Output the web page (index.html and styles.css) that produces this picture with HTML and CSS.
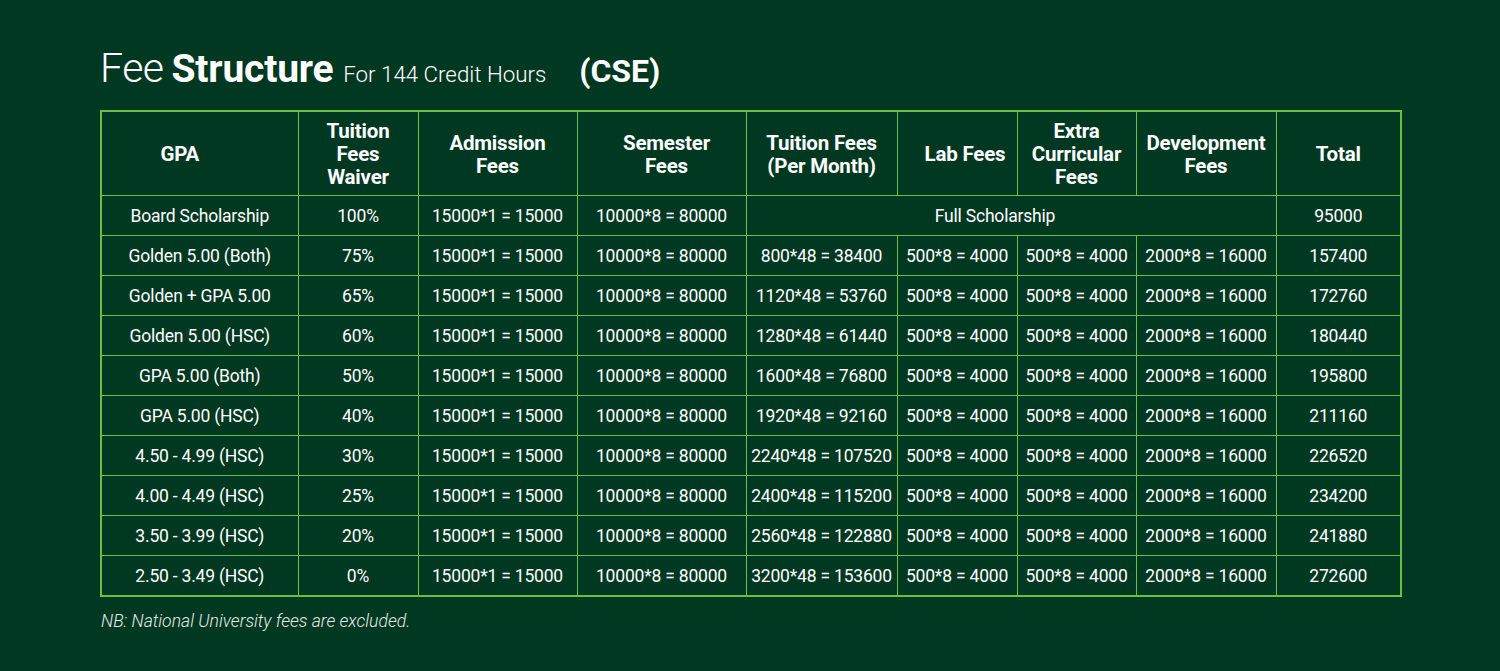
FILE: index.html
```html
<!DOCTYPE html>
<html>
<head>
<meta charset="utf-8">
<link rel="stylesheet" href="styles.css">
</head>
<body>
<div class="page">
  <h1 class="title"><span class="t-light">Fee</span> <span class="t-bold">Structure</span> <span class="t-sub">For 144 Credit Hours</span> <span class="t-cse">(CSE)</span></h1>
  <table class="fees">
    <colgroup>
      <col class="c1"><col class="c2"><col class="c3"><col class="c4"><col class="c5"><col class="c6"><col class="c7"><col class="c8"><col class="c9">
    </colgroup>
    <thead>
      <tr>
        <th class="h-gpa">GPA</th>
        <th>Tuition<br>Fees<br>Waiver</th>
        <th>Admission<br>Fees</th>
        <th class="h-sem">Semester<br>Fees</th>
        <th>Tuition Fees<br>(Per Month)</th>
        <th class="h-lab">Lab Fees</th>
        <th>Extra<br>Curricular<br>Fees</th>
        <th>Development<br>Fees</th>
        <th>Total</th>
      </tr>
    </thead>
    <tbody>
      <tr><td>Board Scholarship</td><td>100%</td><td>15000*1 = 15000</td><td>10000*8 = 80000</td><td colspan="4" class="full">Full Scholarship</td><td>95000</td></tr>
      <tr><td>Golden 5.00 (Both)</td><td>75%</td><td>15000*1 = 15000</td><td>10000*8 = 80000</td><td>800*48 = 38400</td><td>500*8 = 4000</td><td>500*8 = 4000</td><td>2000*8 = 16000</td><td>157400</td></tr>
      <tr><td>Golden + GPA 5.00</td><td>65%</td><td>15000*1 = 15000</td><td>10000*8 = 80000</td><td>1120*48 = 53760</td><td>500*8 = 4000</td><td>500*8 = 4000</td><td>2000*8 = 16000</td><td>172760</td></tr>
      <tr><td>Golden 5.00 (HSC)</td><td>60%</td><td>15000*1 = 15000</td><td>10000*8 = 80000</td><td>1280*48 = 61440</td><td>500*8 = 4000</td><td>500*8 = 4000</td><td>2000*8 = 16000</td><td>180440</td></tr>
      <tr><td>GPA 5.00 (Both)</td><td>50%</td><td>15000*1 = 15000</td><td>10000*8 = 80000</td><td>1600*48 = 76800</td><td>500*8 = 4000</td><td>500*8 = 4000</td><td>2000*8 = 16000</td><td>195800</td></tr>
      <tr><td>GPA 5.00 (HSC)</td><td>40%</td><td>15000*1 = 15000</td><td>10000*8 = 80000</td><td>1920*48 = 92160</td><td>500*8 = 4000</td><td>500*8 = 4000</td><td>2000*8 = 16000</td><td>211160</td></tr>
      <tr><td>4.50 - 4.99 (HSC)</td><td>30%</td><td>15000*1 = 15000</td><td>10000*8 = 80000</td><td>2240*48 = 107520</td><td>500*8 = 4000</td><td>500*8 = 4000</td><td>2000*8 = 16000</td><td>226520</td></tr>
      <tr><td>4.00 - 4.49 (HSC)</td><td>25%</td><td>15000*1 = 15000</td><td>10000*8 = 80000</td><td>2400*48 = 115200</td><td>500*8 = 4000</td><td>500*8 = 4000</td><td>2000*8 = 16000</td><td>234200</td></tr>
      <tr><td>3.50 - 3.99 (HSC)</td><td>20%</td><td>15000*1 = 15000</td><td>10000*8 = 80000</td><td>2560*48 = 122880</td><td>500*8 = 4000</td><td>500*8 = 4000</td><td>2000*8 = 16000</td><td>241880</td></tr>
      <tr><td>2.50 - 3.49 (HSC)</td><td>0%</td><td>15000*1 = 15000</td><td>10000*8 = 80000</td><td>3200*48 = 153600</td><td>500*8 = 4000</td><td>500*8 = 4000</td><td>2000*8 = 16000</td><td>272600</td></tr>
    </tbody>
  </table>
  <p class="note">NB: National University fees are excluded.</p>
</div>
</body>
</html>
```

FILE: styles.css
```css
html, body {
  margin: 0;
  padding: 0;
  background: #013822;
  height: 100%;
}
body {
  font-family: Roboto, "Liberation Sans", sans-serif;
  color: #ffffff;
}
.page {
  padding: 44px 0 0 100px;
}
.title {
  margin: 0;
  height: 66px;
  font-weight: 400;
  line-height: 48px;
  white-space: nowrap;
}
.t-light {
  font-weight: 300;
  font-size: 41px;
  letter-spacing: -0.5px;
}
.t-bold {
  font-weight: 700;
  font-size: 39px;
  letter-spacing: -0.2px;
}
.t-sub {
  font-weight: 300;
  font-size: 22.3px;
  margin-left: 2px;
}
.t-cse {
  font-weight: 700;
  font-size: 32px;
  margin-left: 25px;
}
.fees {
  border-collapse: collapse;
  table-layout: fixed;
  width: 1300px;
  border: 2px solid #6cbf46;
}
.c1 { width: 197px; }
.c2 { width: 120px; }
.c3 { width: 159px; }
.c4 { width: 169px; }
.c5 { width: 151px; }
.c6 { width: 120px; }
.c7 { width: 119px; }
.c8 { width: 140px; }
.c9 { width: 125px; }
.fees th, .fees td {
  border: 1px solid #6cbf46;
  text-align: center;
  padding: 0;
}
.fees th {
  height: 81px;
  padding-top: 2px;
  font-weight: 700;
  font-size: 20.5px;
  line-height: 23px;
  letter-spacing: -0.2px;
}
.fees th.h-gpa { padding-right: 40px; }
.fees th.h-sem { padding-left: 10px; }
.fees th.h-lab { padding-left: 16px; }
.fees td {
  height: 39px;
  font-size: 17.5px;
  letter-spacing: -0.2px;
}
.fees td.full { padding-right: 32px; }
.note {
  margin: 14px 0 0 1px;
  font-style: italic;
  font-weight: 300;
  font-size: 17.6px;
  color: #e3ece6;
}
```
